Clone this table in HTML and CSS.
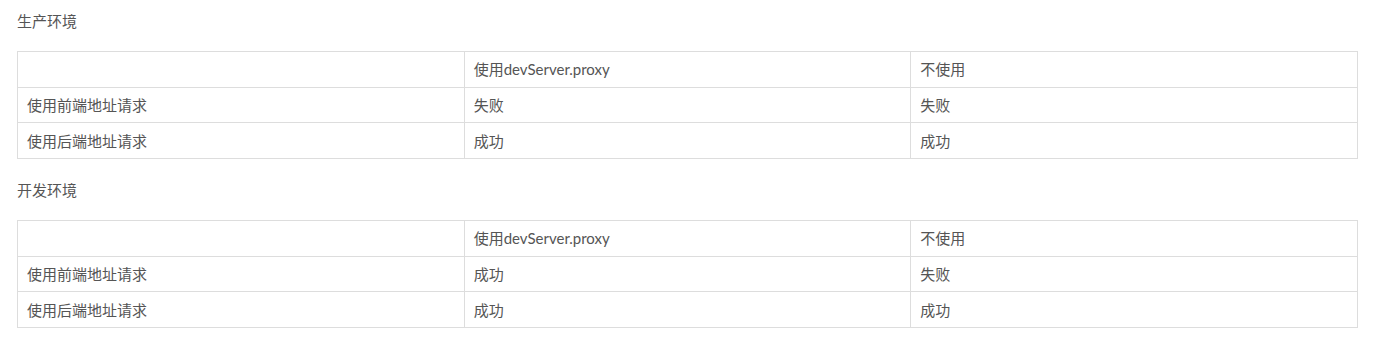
FILE: index.html
```html
<!DOCTYPE html>
<html lang="zh-CN">
<head>
<meta charset="utf-8">
<link rel="stylesheet" href="styles.css">
</head>
<body>
<div class="page">
  <p class="title">生产环境</p>
  <table class="grid">
    <tr><td></td><td>使用devServer.proxy</td><td>不使用</td></tr>
    <tr><td>使用前端地址请求</td><td>失败</td><td>失败</td></tr>
    <tr><td>使用后端地址请求</td><td>成功</td><td>成功</td></tr>
  </table>
  <p class="title second">开发环境</p>
  <table class="grid">
    <tr><td></td><td>使用devServer.proxy</td><td>不使用</td></tr>
    <tr><td>使用前端地址请求</td><td>成功</td><td>失败</td></tr>
    <tr><td>使用后端地址请求</td><td>成功</td><td>成功</td></tr>
  </table>
</div>
</body>
</html>
```
FILE: styles.css
```css
html, body {
  margin: 0;
  padding: 0;
  background: #fff;
}
.page {
  padding: 9px 0 0 17px;
  font-family: "Lato", "Noto Sans CJK SC", sans-serif;
  font-size: 15px;
  color: #555;
}
.title {
  margin: 0;
  line-height: 24px;
}
.title.second {
  margin-top: 19px;
}
.grid {
  margin-top: 18px;
  width: 1341px;
  border-collapse: collapse;
  table-layout: fixed;
}
.grid td {
  border: 1px solid #ddd;
  height: 35.67px;
  padding: 0 9px;
  box-sizing: border-box;
  vertical-align: middle;
  line-height: 20px;
}
```
